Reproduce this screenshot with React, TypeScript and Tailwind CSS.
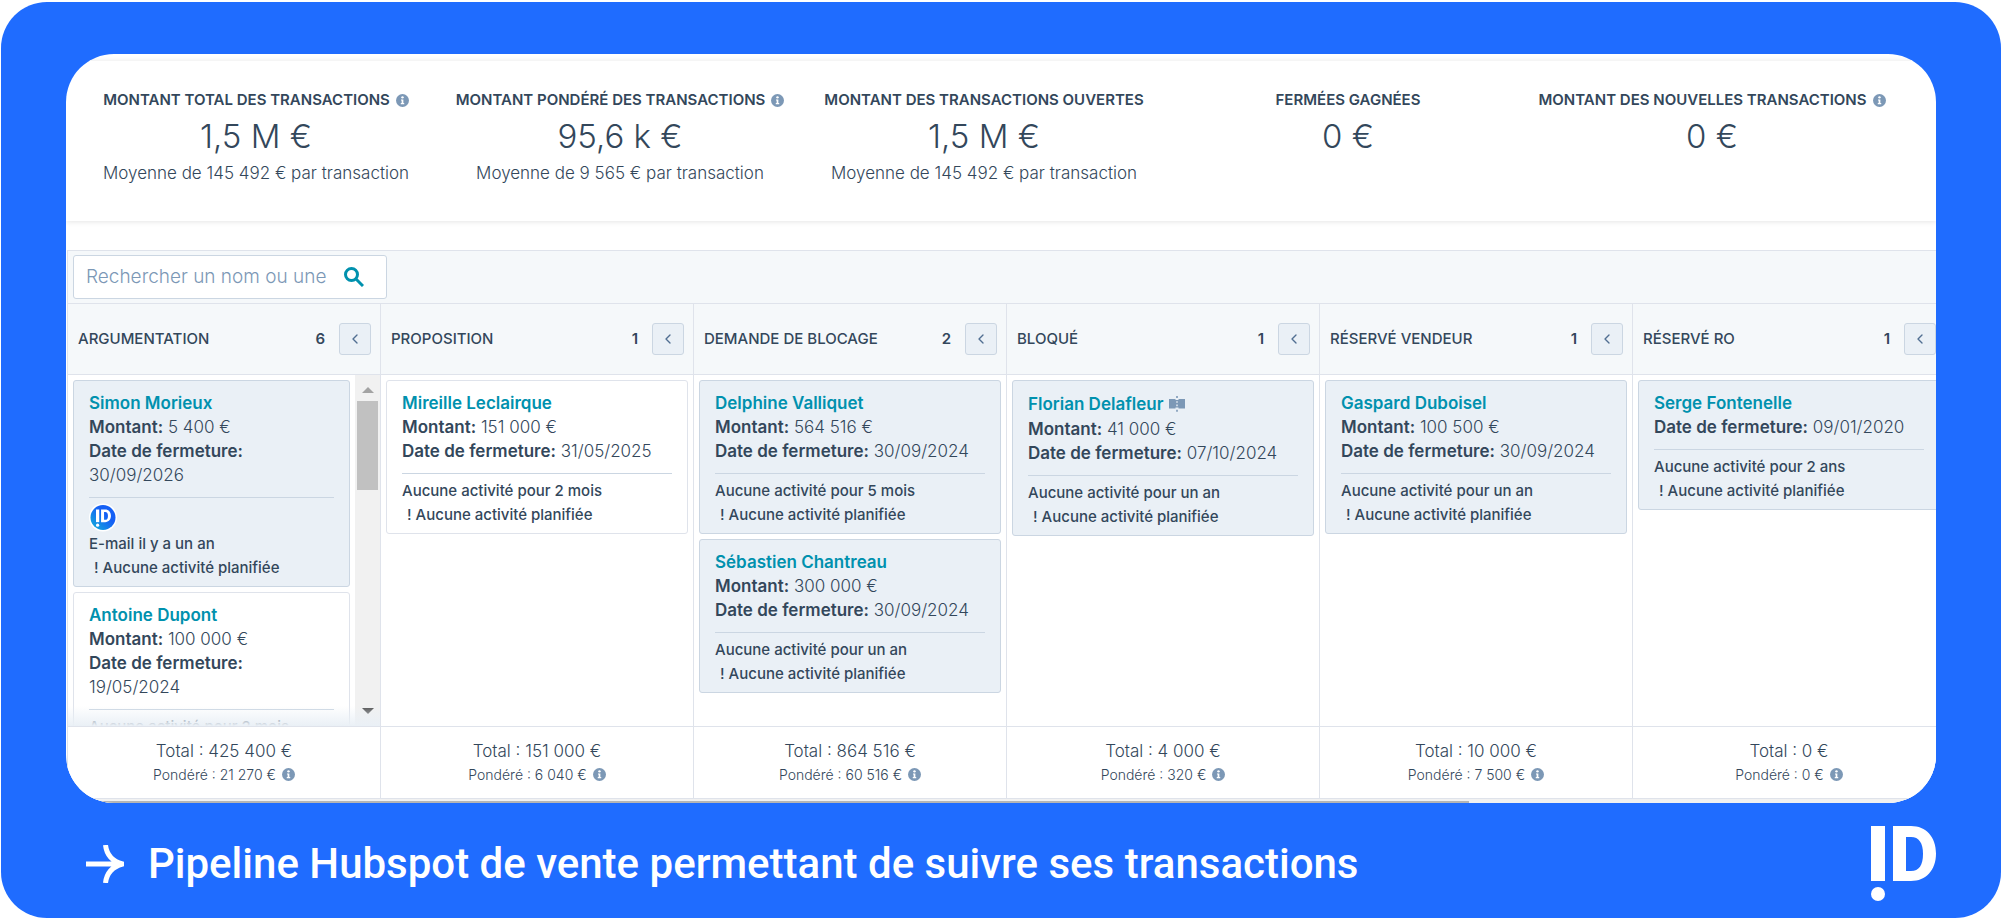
import React from "react";
import { ChevronLeft } from "lucide-react";

interface Stat {
  label: string;
  value: string;
  average?: string;
  info?: boolean;
}

interface Deal {
  name: string;
  amount?: string;
  closeDate: string;
  activity: string;
  muted?: boolean;
  avatar?: boolean;
  merged?: boolean;
}

interface Stage {
  title: string;
  count: number;
  total: string;
  weighted: string;
  deals: Deal[];
  scrollable?: boolean;
}

const stats: Stat[] = [
  { label: "Montant total des transactions", value: "1,5 M €", average: "Moyenne de 145 492 € par transaction", info: true },
  { label: "Montant pondéré des transactions", value: "95,6 k €", average: "Moyenne de 9 565 € par transaction", info: true },
  { label: "Montant des transactions ouvertes", value: "1,5 M €", average: "Moyenne de 145 492 € par transaction" },
  { label: "Fermées gagnées", value: "0 €" },
  { label: "Montant des nouvelles transactions", value: "0 €", info: true },
];

const stages: Stage[] = [
  {
    title: "Argumentation",
    count: 6,
    total: "425 400 €",
    weighted: "21 270 €",
    scrollable: true,
    deals: [
      { name: "Simon Morieux", amount: "5 400 €", closeDate: "30/09/2026", activity: "E-mail il y a un an", muted: true, avatar: true },
      { name: "Antoine Dupont", amount: "100 000 €", closeDate: "19/05/2024", activity: "Aucune activité pour 2 mois" },
    ],
  },
  {
    title: "Proposition",
    count: 1,
    total: "151 000 €",
    weighted: "6 040 €",
    deals: [{ name: "Mireille Leclairque", amount: "151 000 €", closeDate: "31/05/2025", activity: "Aucune activité pour 2 mois" }],
  },
  {
    title: "Demande de blocage",
    count: 2,
    total: "864 516 €",
    weighted: "60 516 €",
    deals: [
      { name: "Delphine Valliquet", amount: "564 516 €", closeDate: "30/09/2024", activity: "Aucune activité pour 5 mois", muted: true },
      { name: "Sébastien Chantreau", amount: "300 000 €", closeDate: "30/09/2024", activity: "Aucune activité pour un an", muted: true },
    ],
  },
  {
    title: "Bloqué",
    count: 1,
    total: "4 000 €",
    weighted: "320 €",
    deals: [{ name: "Florian Delafleur", amount: "41 000 €", closeDate: "07/10/2024", activity: "Aucune activité pour un an", muted: true, merged: true }],
  },
  {
    title: "Réservé vendeur",
    count: 1,
    total: "10 000 €",
    weighted: "7 500 €",
    deals: [{ name: "Gaspard Duboisel", amount: "100 500 €", closeDate: "30/09/2024", activity: "Aucune activité pour un an", muted: true }],
  },
  {
    title: "Réservé RO",
    count: 1,
    total: "0 €",
    weighted: "0 €",
    deals: [{ name: "Serge Fontenelle", closeDate: "09/01/2020", activity: "Aucune activité pour 2 ans", muted: true }],
  },
];

function InfoIcon() {
  return (
    <svg viewBox="0 0 12 12" className="w-[13px] h-[13px] shrink-0" aria-hidden="true">
      <circle cx="6" cy="6" r="6" fill="#7c98b6" />
      <circle cx="6" cy="3.1" r="1.1" fill="#fff" />
      <path d="M4.6 5h2.2v3.4h.8v1H4.4v-1h.8V6h-.6z" fill="#fff" />
    </svg>
  );
}

function LogoShape() {
  return (
    <>
      <rect x="0" y="0" width="14" height="55" />
      <circle cx="7" cy="68" r="7" />
      <path fillRule="evenodd" d="M22 0h18c15 0 25 11 25 27.500s-10 27.500-25 27.500H22zM35 11v34h5c8 0 12-6 12-17s-4-17-12-17z" />
    </>
  );
}

function Avatar() {
  return (
    <svg viewBox="0 0 28 28" className="w-7 h-[29px]" aria-hidden="true">
      <defs>
        <linearGradient id="avatar" x1="1" y1="0" x2="0" y2="1">
          <stop offset="0.4" stopColor="#1560f5" />
          <stop offset="1" stopColor="#12b5d8" />
        </linearGradient>
      </defs>
      <circle cx="14" cy="14" r="14" fill="#fff" />
      <circle cx="14" cy="14" r="12.500" fill="url(#avatar)" />
      <g transform="translate(7 6) scale(0.23)" fill="#fff">
        <LogoShape />
      </g>
    </svg>
  );
}

function MergeIcon() {
  return (
    <svg viewBox="0 0 16 16" className="w-4 h-4" fill="#7c98b6" aria-hidden="true">
      <path fillRule="evenodd" d="M0 3h6.500v1h3V3H16v9.500H9.500v-1h-3v1H0zM7.300 5.200v1.600h1.400V5.200zM7.300 8.600v1.600h1.400V8.600z" />
      <path d="M7.200 0h1.600v2H7.200zM7.200 13.800h1.600v2H7.200z" />
    </svg>
  );
}

function DealCard({ deal }: { deal: Deal }) {
  return (
    <article
      className={`shrink-0 rounded-[3px] border px-[15px] pt-2.5 pb-1.5 text-[17px] leading-6 ${
        deal.muted ? "bg-[#eaf0f6] border-[#cbd6e2]" : "bg-white border-[#dfe3eb]"
      }`}
    >
      <div className={`flex items-center gap-1.5 ${deal.merged ? "h-[26px]" : "h-6"}`}>
        <a href="#" className="font-semibold text-[#0091ae]">{deal.name}</a>
        {deal.merged && <MergeIcon />}
      </div>
      {deal.amount && (
        <p className="font-light">
          <span className="font-semibold">Montant:</span> {deal.amount}
        </p>
      )}
      <p className="font-light">
        <span className="font-semibold">Date de fermeture:</span> {deal.closeDate}
      </p>
      <div className="mt-2.5 border-t border-[#cbd6e2] pt-[5px] text-[15px] leading-6 font-medium">
        {deal.avatar && <Avatar />}
        <p>{deal.activity}</p>
        <p className="pl-[5px]">! Aucune activité planifiée</p>
      </div>
    </article>
  );
}

function ScrollTrack() {
  return (
    <div className="flex w-[25px] shrink-0 flex-col items-center justify-between bg-[#f1f1f1] pt-3 pb-3" aria-hidden="true">
      <div className="flex flex-col items-center gap-2">
        <svg viewBox="0 0 12 6" className="w-3 h-1.5" fill="#a3a3a3"><path d="M6 0l6 6H0z" /></svg>
        <div className="h-[89px] w-[21px] bg-[#c1c1c1]" />
      </div>
      <svg viewBox="0 0 12 6" className="w-3 h-1.5" fill="#505050"><path d="M6 6l6-6H0z" /></svg>
    </div>
  );
}

function StageColumn({ stage }: { stage: Stage }) {
  return (
    <section className="flex w-[313px] shrink-0 flex-col border-r border-[#dfe3eb]">
      <header className="flex h-[71px] items-center border-b border-[#dfe3eb] bg-[#f5f8fa] pl-2.5 pr-[9px]">
        <h2 className="flex-1 text-[15px] font-medium uppercase">{stage.title}</h2>
        <span className="mr-[14px] text-[15px] font-semibold">{stage.count}</span>
        <button
          type="button"
          aria-label={`Réduire ${stage.title}`}
          className="flex h-8 w-8 items-center justify-center rounded-[3px] border border-[#cbd6e2] bg-[#eaf0f6] text-[#506e91]"
        >
          <ChevronLeft className="w-4 h-4" />
        </button>
      </header>
      <div className="relative flex h-[351px] overflow-hidden bg-white">
        <div className="flex min-w-0 flex-1 flex-col gap-[5px] p-[5px]">
          {stage.deals.map((deal) => (
            <DealCard key={deal.name} deal={deal} />
          ))}
        </div>
        {stage.scrollable && <ScrollTrack />}
        {stage.scrollable && (
          <div className="absolute bottom-0 left-0 right-0 h-5 bg-linear-to-t from-[#eaf0f6] to-transparent" />
        )}
      </div>
      <footer className="flex h-[73px] flex-col items-center justify-center border-y border-[#dfe3eb] bg-white font-light">
        <p className="text-[17px] leading-6">Total : {stage.total}</p>
        <p className="flex items-center gap-1.5 text-sm leading-6">
          Pondéré : {stage.weighted} <InfoIcon />
        </p>
      </footer>
    </section>
  );
}

export default function App() {
  return (
    <div className="bg-white pt-0.5 pl-px pb-px font-['Inter','Open_Sans',sans-serif] text-[#33475b]">
      <div className="rounded-[46px] bg-[#1f6cff] px-[65px] pt-[52px]">
        <main className="overflow-hidden rounded-[48px] bg-white">
          <div className="mt-1.5 border-t border-[#f5f5f5] pt-[27px] pb-9 pl-2 pr-[42px] shadow-[0_1px_5px_rgba(0,0,0,0.1)]">
            <dl className="grid grid-cols-5 text-center">
              {stats.map((stat) => (
                <div key={stat.label}>
                  <dt className="flex items-center justify-center gap-1.5 whitespace-nowrap text-[15px] leading-6 font-semibold uppercase">
                    {stat.label}
                    {stat.info && <InfoIcon />}
                  </dt>
                  <dd className="text-[33px] leading-[49px] font-light">{stat.value}</dd>
                  {stat.average && <dd className="text-[17px] leading-6 font-light">{stat.average}</dd>}
                </div>
              ))}
            </dl>
          </div>

          <div className="mt-[29px] ml-px border-t border-l border-[#dfe3eb] bg-[#f5f8fa]">
            <div className="flex h-[53px] items-center border-b border-[#dfe3eb] pl-[5px]">
              <label className="flex h-11 w-[314px] items-center rounded-[3px] border border-[#cbd6e2] bg-white pl-3 pr-[22px]">
                <span className="sr-only">Rechercher</span>
                <input
                  type="text"
                  placeholder="Rechercher un nom ou une"
                  className="min-w-0 flex-1 text-[19px] font-light outline-none placeholder:text-[#7c98b6]"
                />
                <svg viewBox="0 0 20 20" className="ml-2.5 w-5 h-5 shrink-0" fill="none" stroke="#0091ae" strokeWidth="3" aria-hidden="true">
                  <circle cx="7.500" cy="7.500" r="6" />
                  <path d="M12 12l7 7" />
                </svg>
              </label>
            </div>
            <div className="flex overflow-hidden">
              {stages.map((stage) => (
                <StageColumn key={stage.title} stage={stage} />
              ))}
            </div>
            <div className="h-1 bg-[#f1f1f1] pt-0.5">
              <div className="h-0.5 w-3/4 bg-[#b5b5b5]" />
            </div>
          </div>
        </main>

        <footer className="flex h-[115px] items-center pt-1.5">
          <svg viewBox="0 0 38 38" className="ml-5 w-[38px] h-[38px]" fill="none" stroke="#fff" strokeWidth="5" aria-hidden="true">
            <path d="M0 19h34M19.500 0c1 9 6 16 17 19-11 3-16 10-17 19" />
          </svg>
          <p className="ml-6 flex-1 font-['Roboto',sans-serif] text-[42px] leading-none font-medium text-white">
            Pipeline Hubspot de vente permettant de suivre ses transactions
          </p>
          <svg viewBox="0 0 65 75" className="w-[65px] h-[75px]" fill="#fff" role="img" aria-label="ID">
            <LogoShape />
          </svg>
        </footer>
      </div>
    </div>
  );
}
